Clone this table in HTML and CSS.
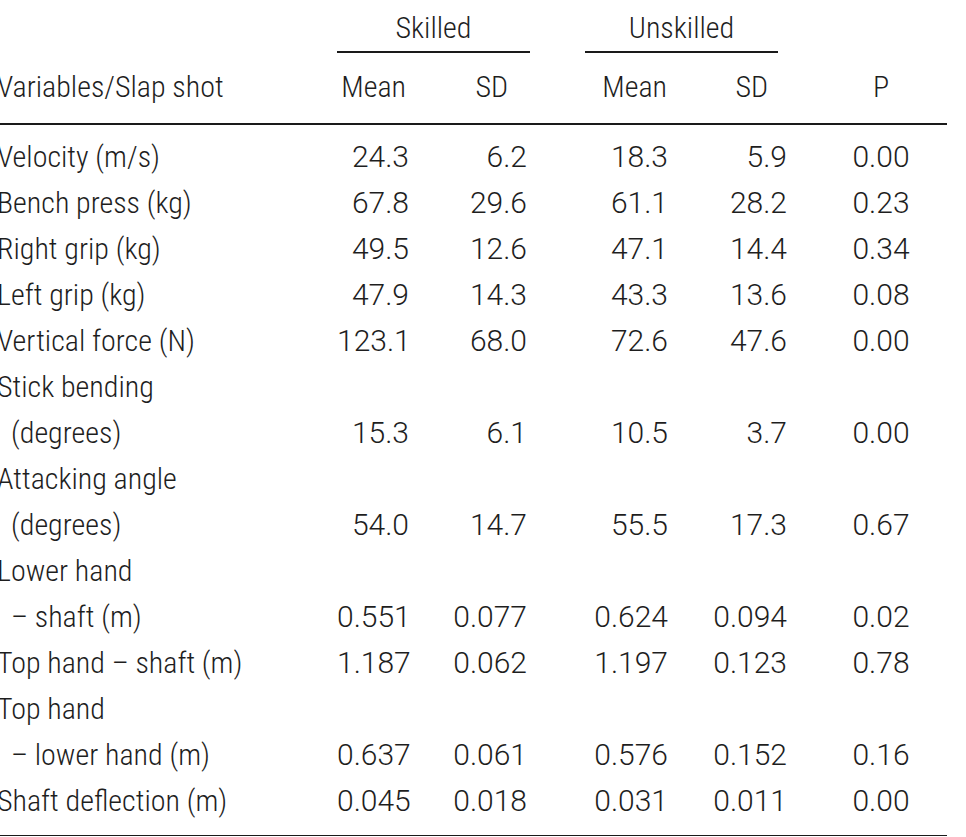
FILE: index.html
```html
<!DOCTYPE html>
<html lang="en">
<head>
<meta charset="utf-8">
<title>Slap shot variables</title>
<link rel="stylesheet" href="styles.css">
</head>
<body>
<table class="tbl">
  <colgroup>
    <col class="c-label">
    <col class="c-m1">
    <col class="c-s1">
    <col class="c-m2">
    <col class="c-s2">
    <col class="c-p">
  </colgroup>
  <thead>
    <tr class="group-row">
      <th></th>
      <th colspan="2"><div class="group group-skilled">Skilled</div></th>
      <th colspan="2"><div class="group group-unskilled">Unskilled</div></th>
      <th></th>
    </tr>
    <tr class="head-row">
      <th class="h-label">Variables/Slap shot</th>
      <th class="h-mean h-mean1">Mean</th>
      <th class="h-sd">SD</th>
      <th class="h-mean h-mean2">Mean</th>
      <th class="h-sd">SD</th>
      <th class="h-p">P</th>
    </tr>
  </thead>
  <tbody>
    <tr class="first"><td class="lbl">Velocity (m/s)</td><td class="n m1">24.3</td><td class="n s1">6.2</td><td class="n m2">18.3</td><td class="n s2">5.9</td><td class="p">0.00</td></tr>
    <tr><td class="lbl">Bench press (kg)</td><td class="n m1">67.8</td><td class="n s1">29.6</td><td class="n m2">61.1</td><td class="n s2">28.2</td><td class="p">0.23</td></tr>
    <tr><td class="lbl">Right grip (kg)</td><td class="n m1">49.5</td><td class="n s1">12.6</td><td class="n m2">47.1</td><td class="n s2">14.4</td><td class="p">0.34</td></tr>
    <tr><td class="lbl">Left grip (kg)</td><td class="n m1">47.9</td><td class="n s1">14.3</td><td class="n m2">43.3</td><td class="n s2">13.6</td><td class="p">0.08</td></tr>
    <tr><td class="lbl">Vertical force (N)</td><td class="n m1">123.1</td><td class="n s1">68.0</td><td class="n m2">72.6</td><td class="n s2">47.6</td><td class="p">0.00</td></tr>
    <tr><td class="lbl">Stick bending</td><td></td><td></td><td></td><td></td><td></td></tr>
    <tr><td class="lbl sub">(degrees)</td><td class="n m1">15.3</td><td class="n s1">6.1</td><td class="n m2">10.5</td><td class="n s2">3.7</td><td class="p">0.00</td></tr>
    <tr><td class="lbl">Attacking angle</td><td></td><td></td><td></td><td></td><td></td></tr>
    <tr><td class="lbl sub">(degrees)</td><td class="n m1">54.0</td><td class="n s1">14.7</td><td class="n m2">55.5</td><td class="n s2">17.3</td><td class="p">0.67</td></tr>
    <tr><td class="lbl">Lower hand</td><td></td><td></td><td></td><td></td><td></td></tr>
    <tr><td class="lbl sub">– shaft (m)</td><td class="n m1">0.551</td><td class="n s1">0.077</td><td class="n m2">0.624</td><td class="n s2">0.094</td><td class="p">0.02</td></tr>
    <tr><td class="lbl">Top hand – shaft (m)</td><td class="n m1">1.187</td><td class="n s1">0.062</td><td class="n m2">1.197</td><td class="n s2">0.123</td><td class="p">0.78</td></tr>
    <tr><td class="lbl">Top hand</td><td></td><td></td><td></td><td></td><td></td></tr>
    <tr><td class="lbl sub">– lower hand (m)</td><td class="n m1">0.637</td><td class="n s1">0.061</td><td class="n m2">0.576</td><td class="n s2">0.152</td><td class="p">0.16</td></tr>
    <tr class="last"><td class="lbl">Shaft deflection (m)</td><td class="n m1">0.045</td><td class="n s1">0.018</td><td class="n m2">0.031</td><td class="n s2">0.011</td><td class="p">0.00</td></tr>
  </tbody>
</table>
</body>
</html>
```
FILE: styles.css
```css
html, body {
  margin: 0;
  padding: 0;
  background: #ffffff;
}

body {
  padding-top: 5px;
  font-family: Roboto, "Liberation Sans", Arial, sans-serif;
  font-stretch: 85%;
  font-weight: 330;
  font-size: 30px;
  color: #1e1e1e;
  overflow: hidden;
}

.tbl {
  border-collapse: collapse;
  table-layout: fixed;
  width: 950px;
  margin-left: -3px;
}

.c-label { width: 340px; }
.c-m1 { width: 93px; }
.c-s1 { width: 120px; }
.c-m2 { width: 140px; }
.c-s2 { width: 120px; }
.c-p { width: 137px; }

.tbl th,
.tbl td {
  padding: 0;
  font-weight: 330;
  line-height: 46px;
  white-space: nowrap;
}

/* group header row */
.tbl .group {
  text-align: center;
  border-bottom: 2px solid #1a1a1a;
}
.tbl .group-skilled {
  margin-right: 20px;
}
.tbl .group-unskilled {
  margin-left: 35px;
  margin-right: 32px;
}

/* column header row */
.tbl .head-row th {
  padding-top: 11px;
  padding-bottom: 13px;
  border-bottom: 2px solid #1a1a1a;
  text-align: right;
}
.tbl .head-row .h-label { text-align: left; }
.tbl .head-row .h-mean1 { padding-right: 24px; }
.tbl .head-row .h-mean2 { padding-right: 23px; }
.tbl .head-row .h-sd { padding-right: 42px; }
.tbl .head-row .h-p { text-align: center; padding-left: 5px; }

/* body */
.tbl .lbl { text-align: left; }
.tbl .lbl.sub { padding-left: 14px; }

.tbl .n,
.tbl .p { font-stretch: 90%; }
.tbl .n { text-align: right; }
.tbl .m1 { padding-right: 21px; }
.tbl .s1 { padding-right: 23px; }
.tbl .m2 { padding-right: 22px; }
.tbl .s2 { padding-right: 23px; }
.tbl .p { text-align: center; padding-left: 5px; }

.tbl tbody tr.first td { padding-top: 9px; }
.tbl tbody tr.last td {
  padding-bottom: 11px;
  border-bottom: 1.5px solid #1a1a1a;
}
```
